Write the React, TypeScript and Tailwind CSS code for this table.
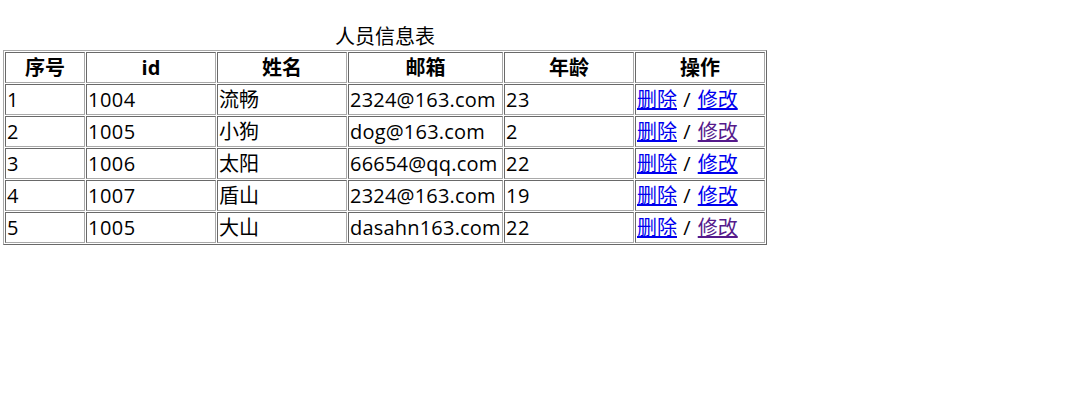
const rows = [
  { no: 1, id: '1004', name: '流畅', email: '2324@163.com', age: '23', visited: false },
  { no: 2, id: '1005', name: '小狗', email: 'dog@163.com', age: '2', visited: true },
  { no: 3, id: '1006', name: '太阳', email: '66654@qq.com', age: '22', visited: false },
  { no: 4, id: '1007', name: '盾山', email: '2324@163.com', age: '19', visited: false },
  { no: 5, id: '1005', name: '大山', email: 'dasahn163.com', age: '22', visited: true },
]

const cell =
  'border border-t-[#696969] border-l-[#696969] border-b-[#a9a9a9] border-r-[#a9a9a9] p-px leading-[27px] whitespace-nowrap'

export default function App() {
  return (
    <div className="min-h-screen bg-white pt-[23px] pl-[3px] text-black text-[20px] font-['Open_Sans','Noto_Sans_CJK_SC',sans-serif]">
      <table className="table-fixed w-[764px] border-separate border-spacing-px border border-t-[#a9a9a9] border-l-[#a9a9a9] border-b-[#696969] border-r-[#696969]">
        <caption className="leading-[27px] text-center">人员信息表</caption>
        <thead>
          <tr>
            <th className={`${cell} w-[80px] font-bold`}>序号</th>
            <th className={`${cell} w-[130px] font-bold`}>id</th>
            <th className={`${cell} w-[130px] font-bold`}>姓名</th>
            <th className={`${cell} w-[155px] font-bold`}>邮箱</th>
            <th className={`${cell} w-[130px] font-bold`}>年龄</th>
            <th className={`${cell} w-[130px] font-bold`}>操作</th>
          </tr>
        </thead>
        <tbody>
          {rows.map((r) => (
            <tr key={r.no}>
              <td className={`${cell} tracking-[0.5px]`}>{r.no}</td>
              <td className={`${cell} tracking-[0.5px]`}>{r.id}</td>
              <td className={cell}>{r.name}</td>
              <td className={`${cell} tracking-[0.2px]`}>{r.email}</td>
              <td className={`${cell} tracking-[0.5px]`}>{r.age}</td>
              <td className={cell}>
                <a href="#" className="text-[#0000ee] underline">删除</a>
                <span className="tracking-[1px]">{' / '}</span>
                <a href="#" className={`${r.visited ? 'text-[#551a8b]' : 'text-[#0000ee]'} underline`}>
                  修改
                </a>
              </td>
            </tr>
          ))}
        </tbody>
      </table>
    </div>
  )
}
